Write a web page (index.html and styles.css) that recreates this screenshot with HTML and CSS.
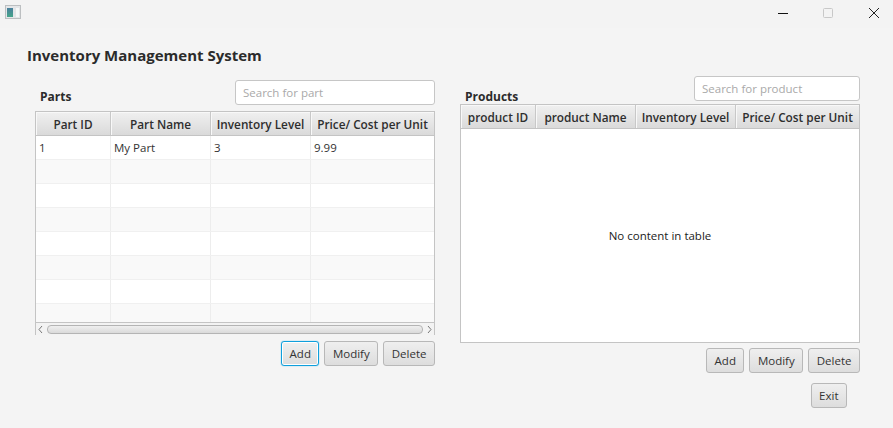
FILE: index.html
```html
<!DOCTYPE html>
<html lang="en">
<head>
    <meta charset="UTF-8">
    <title>Inventory Management System</title>
    <link rel="stylesheet" href="styles.css">
</head>
<body>
    <!-- title bar -->
    <div class="titlebar">
        <svg class="app-icon" width="16" height="14" viewBox="0 0 16 14">
            <defs>
                <linearGradient id="iconFill" x1="0" y1="0" x2="0" y2="1">
                    <stop offset="0" stop-color="#4a7f9c"/>
                    <stop offset="1" stop-color="#45a58a"/>
                </linearGradient>
            </defs>
            <rect x="0.5" y="0.5" width="15" height="13" fill="#e4e6e8" stroke="#bcbfc1"/>
            <rect x="2" y="3" width="6" height="9" fill="url(#iconFill)"/>
            <rect x="11" y="3" width="3" height="9" fill="#f6f8f8"/>
        </svg>
        <div class="window-buttons">
            <svg width="12" height="12" viewBox="0 0 12 12"><path d="M1 6.5H11" stroke="#111" stroke-width="1"/></svg>
            <svg width="12" height="12" viewBox="0 0 12 12"><rect x="1.5" y="1.5" width="9" height="9" rx="1" fill="none" stroke="#c8c8c8"/></svg>
            <svg width="12" height="12" viewBox="0 0 12 12"><path d="M1 1L11 11M11 1L1 11" stroke="#222" stroke-width="1"/></svg>
        </div>
    </div>

    <div class="content">
        <h1>Inventory Management System</h1>

        <div class="panels">
            <!-- parts -->
            <section class="panel parts-panel">
                <div class="panel-top">
                    <h2>Parts</h2>
                    <input class="search" type="text" placeholder="Search for part">
                </div>
                <div class="table">
                    <div class="row head">
                        <div>Part ID</div>
                        <div>Part Name</div>
                        <div>Inventory Level</div>
                        <div>Price/ Cost per Unit</div>
                    </div>
                    <div class="row"><div>1</div><div>My Part</div><div>3</div><div>9.99</div></div>
                    <div class="row odd"><div></div><div></div><div></div><div></div></div>
                    <div class="row"><div></div><div></div><div></div><div></div></div>
                    <div class="row odd"><div></div><div></div><div></div><div></div></div>
                    <div class="row"><div></div><div></div><div></div><div></div></div>
                    <div class="row odd"><div></div><div></div><div></div><div></div></div>
                    <div class="row"><div></div><div></div><div></div><div></div></div>
                    <div class="row odd last"><div></div><div></div><div></div><div></div></div>
                    <div class="hscroll">
                        <svg width="7" height="9" viewBox="0 0 7 9"><path d="M5 1L2 4.5L5 8" fill="none" stroke="#777"/></svg>
                        <div class="thumb"></div>
                        <svg width="7" height="9" viewBox="0 0 7 9"><path d="M2 1L5 4.5L2 8" fill="none" stroke="#777"/></svg>
                    </div>
                </div>
                <div class="actions">
                    <button class="focused">Add</button>
                    <button>Modify</button>
                    <button>Delete</button>
                </div>
            </section>

            <!-- products -->
            <section class="panel products-panel">
                <div class="panel-top">
                    <h2>Products</h2>
                    <input class="search" type="text" placeholder="Search for product">
                </div>
                <div class="table">
                    <div class="row head">
                        <div>product ID</div>
                        <div>product Name</div>
                        <div>Inventory Level</div>
                        <div>Price/ Cost per Unit</div>
                    </div>
                    <div class="empty">No content in table</div>
                </div>
                <div class="actions">
                    <button>Add</button>
                    <button>Modify</button>
                    <button>Delete</button>
                </div>
                <div class="exit-row">
                    <button>Exit</button>
                </div>
            </section>
        </div>
    </div>
</body>
</html>
```

FILE: styles.css
```css
* {
    margin: 0;
    padding: 0;
    box-sizing: border-box;
}

body {
    width: 893px;
    height: 428px;
    overflow: hidden;
    background: #f4f4f4;
    font-family: "Open Sans", "Noto Sans", sans-serif;
    font-size: 11.5px;
    color: #333;
}

.titlebar {
    height: 28px;
    display: flex;
    justify-content: space-between;
    align-items: flex-start;
    background: #f3f3f3;
    padding: 5px 13px 0 5px;
}

.window-buttons {
    display: flex;
    gap: 33px;
    padding-top: 2px;
}

.window-buttons svg:last-child {
    margin-left: 1px;
}

.content {
    padding: 17px 33px 0 27px;
}

h1 {
    font-size: 15px;
    line-height: 20px;
    font-weight: 700;
    color: #2b2b2b;
}

.panels {
    display: flex;
    gap: 25px;
    padding-left: 8px;
}

.panel {
    width: 400px;
}

.parts-panel {
    margin-top: 15px;
}

.products-panel {
    margin-top: 11px;
}

.panel-top {
    display: flex;
    justify-content: space-between;
    align-items: flex-end;
    padding-left: 5px;
}

.parts-panel .panel-top {
    margin-bottom: 6px;
}

.products-panel .panel-top {
    margin-bottom: 3px;
}

h2 {
    font-size: 12px;
    line-height: 16px;
    font-weight: 700;
    color: #2b2b2b;
}

.products-panel h2 {
    margin-bottom: -4px;
}

.search {
    height: 25px;
    background: #fff;
    border: 1px solid #c6c6c6;
    border-radius: 3px;
    padding: 0 7px;
    font-family: inherit;
    font-size: 11.5px;
    outline: none;
}

.parts-panel .search {
    width: 200px;
}

.products-panel .search {
    width: 166px;
}

.search::placeholder {
    color: #a9a9a9;
    opacity: 1;
}

.table {
    border: 1px solid #c4c4c4;
    background: #fff;
}

.parts-panel .table {
    height: 224px;
}

.products-panel .table {
    height: 239px;
    display: flex;
    flex-direction: column;
}

.row {
    display: grid;
    grid-template-columns: 75px 100px 100px 1fr;
    height: 24px;
    background: #fff;
    border-bottom: 1px solid #f0f0f0;
}

.row > div {
    border-right: 1px solid #ededed;
    padding: 0 3px;
    line-height: 24px;
    white-space: nowrap;
    overflow: hidden;
}

.row > div:last-child {
    border-right: none;
}

.row.odd {
    background: #f9f9f9;
}

.row.last {
    height: 18px;
    border-bottom: none;
}

.row.head {
    background: linear-gradient(#f0f0f0, #dadada);
    border-bottom: 1px solid #c4c4c4;
}

.row.head > div {
    border-right: 1px solid #c8c8c8;
    box-shadow: inset 1px 1px 0 #f8f8f8;
    text-align: center;
    font-size: 11.8px;
    font-weight: 600;
    line-height: 25px;
    padding: 0;
    color: #2e2e2e;
}

.row.head > div:last-child {
    border-right: none;
}

.hscroll {
    height: 13px;
    display: flex;
    align-items: center;
    gap: 3px;
    padding: 0 1px;
    background: #f3f3f3;
    border-top: 1px solid #c4c4c4;
}

.thumb {
    flex: 1;
    height: 9px;
    border: 1px solid #b4b4b4;
    border-radius: 4px;
    background: linear-gradient(#efefef, #dadada);
}

.empty {
    flex: 1;
    display: flex;
    justify-content: center;
    align-items: center;
    color: #222;
}

.actions {
    display: flex;
    justify-content: flex-end;
    gap: 5px;
    margin-top: 5px;
}

.parts-panel .actions {
    margin-top: 6px;
}

button {
    height: 25px;
    min-width: 35px;
    padding: 0 7.5px;
    background: linear-gradient(#efefef, #dddddd);
    border: 1px solid #b8b8b8;
    border-radius: 3px;
    font-family: inherit;
    font-size: 11.5px;
    color: #333;
}

button.focused {
    border: 1px solid #0f9fdc;
    box-shadow: 0 0 1px #0f9fdc, inset 0 0 0 1px #fff;
}

.exit-row {
    display: flex;
    justify-content: flex-end;
    margin-top: 10px;
    padding-right: 13px;
}
```
